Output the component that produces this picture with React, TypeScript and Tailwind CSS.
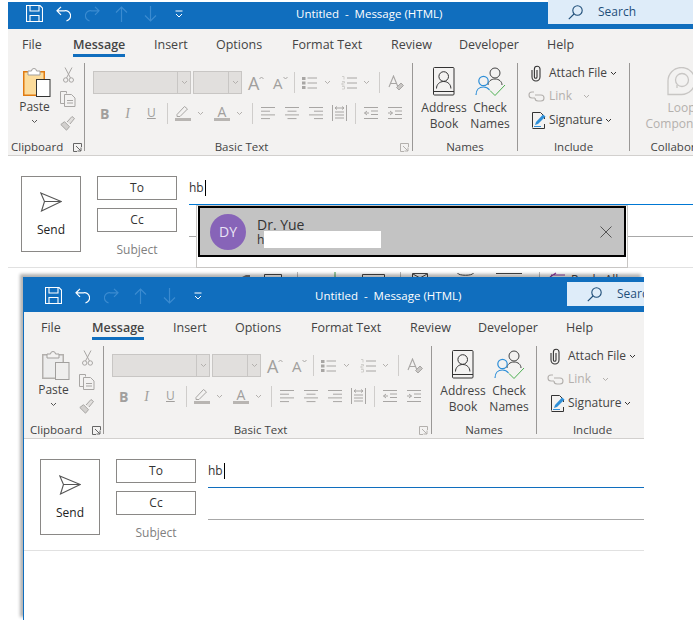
const tabs = [
  { label: 'File', width: 'w-[51px]' },
  { label: 'Message', width: 'w-[81px]', active: true },
  { label: 'Insert', width: 'w-[62px]' },
  { label: 'Options', width: 'w-[76px]' },
  { label: 'Format Text', width: 'w-[99px]' },
  { label: 'Review', width: 'w-[68px]' },
  { label: 'Developer', width: 'w-[88px]' },
  { label: 'Help', width: 'w-[40px]' },
];

const gray = '#a8a6a4';

function Chevron({ color = '#8a8886', className = '' }: { color?: string; className?: string }) {
  return (
    <svg width="7" height="5" viewBox="0 0 7 5" fill="none" className={className}>
      <path d="M1 1l2.5 2.5L6 1" stroke={color} strokeWidth="1" />
    </svg>
  );
}

function Launcher({ color }: { color: string }) {
  return (
    <svg width="9" height="9" viewBox="0 0 9 9" fill="none" className="mt-[7px] shrink-0">
      <path d="M8.5 4V.5H.5v8H4M3 3l5 5M8 4.5V8H4.5" stroke={color} strokeWidth="1" />
    </svg>
  );
}

function TitleIcons() {
  const dim = '#3b8bd0';
  return (
    <div className="flex w-[270px] shrink-0 items-center pt-[5px]">
      <div className="w-[30px]">
        <svg width="17" height="17" viewBox="0 0 17 17" fill="none" stroke="#fff" strokeWidth="1.1">
          <path d="M.5.5H14L16.5 3v13.5H.5zM4 .5V6h9V.5M4 16.5v-6h9v6" />
        </svg>
      </div>
      <div className="w-[29px]">
        <svg width="15" height="16" viewBox="0 0 15 16" fill="none" stroke="#fff" strokeWidth="1.2">
          <path d="M5 .8L1 4.8l4 4M1 4.8h7.5a5 5 0 0 1 2 10" />
        </svg>
      </div>
      <div className="w-[30px]">
        <svg width="15" height="16" viewBox="0 0 15 16" fill="none" stroke={dim} strokeWidth="1.2">
          <path d="M10 .8l4 4-4 4M14 4.8H6.5a5 5 0 0 0-2 10" />
        </svg>
      </div>
      <div className="w-[29px]">
        <svg width="13" height="16" viewBox="0 0 13 16" fill="none" stroke={dim} strokeWidth="1.2">
          <path d="M1 6.5L6.5 1 12 6.5M6.5 1v15" />
        </svg>
      </div>
      <div className="w-[31px]">
        <svg width="13" height="16" viewBox="0 0 13 16" fill="none" stroke={dim} strokeWidth="1.2">
          <path d="M1 9.5L6.5 15 12 9.5M6.5 15V0" />
        </svg>
      </div>
      <svg width="8" height="8" viewBox="0 0 8 8" fill="none" stroke="#fff" strokeWidth="1">
        <path d="M.5 1h7M1 4l3 3 3-3" />
      </svg>
    </div>
  );
}

function SearchBox() {
  return (
    <div className="flex h-[24px] flex-1 items-center gap-[15px] bg-[#deecf9] pl-[20px]">
      <svg width="15" height="15" viewBox="0 0 15 15" fill="none" stroke="#1f4e79" strokeWidth="1.1" className="shrink-0">
        <circle cx="9.5" cy="5.5" r="4.7" />
        <path d="M6 9L.8 14.2" />
      </svg>
      <span className="text-[12px] whitespace-nowrap text-[#1f4e79]">Search</span>
    </div>
  );
}

function PasteIcon({ enabled }: { enabled: boolean }) {
  return (
    <svg width="28" height="31" viewBox="0 0 28 31" fill="none">
      <rect x="0.75" y="5.75" width="20.5" height="23.5" fill={enabled ? '#fcdc9c' : '#ededed'} stroke={enabled ? '#e07b12' : '#b3b0ad'} strokeWidth="1.5" />
      <path d="M5 9V5h3.5a2.5 2.5 0 0 1 5 0H17v4z" fill={enabled ? '#fff' : '#f3f2f1'} stroke="#a19f9d" />
      <rect x="13.5" y="13.5" width="13.5" height="17" fill={enabled ? '#fff' : '#efeeed'} stroke={enabled ? '#333' : '#a19f9d'} strokeWidth="1" />
    </svg>
  );
}

function ClipboardGroup({ enabled }: { enabled: boolean }) {
  return (
    <div className="flex h-[88px] w-[77px] shrink-0 flex-col border-r border-[#9a9896]">
      <div className="flex flex-1">
        <div className="flex w-[52px] flex-col items-center pt-[3px] pl-[1px]">
          <div className="pl-[5px]">
            <PasteIcon enabled={enabled} />
          </div>
          <span className="mt-[2px] text-[12px] leading-[16px]">Paste</span>
          <Chevron color="#555" className="mt-[4px]" />
        </div>
        <div className="flex flex-1 flex-col items-start">
          <div className="flex h-[24px] w-[16px] items-center justify-center">
            <svg width="11" height="16" viewBox="0 0 11 16" fill="none" stroke={gray}>
              <path d="M2 .5L7.5 11M9 .5L3.5 11" />
              <circle cx="2.7" cy="13" r="2.2" />
              <circle cx="8.3" cy="13" r="2.2" />
            </svg>
          </div>
          <div className="flex h-[24px] w-[16px] items-center justify-center">
            <svg width="16" height="16" viewBox="0 0 16 16" fill="none" stroke={gray}>
              <path d="M5 12.5H.5V.5h6v2" />
              <path d="M4.5 3.5h7L15 7v8.5H4.5zM7 9.5h6M7 12h6" />
            </svg>
          </div>
          <div className="flex h-[24px] w-[16px] items-center justify-center">
            <svg width="16" height="16" viewBox="0 0 16 16" fill="none" stroke={gray}>
              <path d="M.8 9.5l5.7 5.7 3-3.5-5-5z" fill="#d2d0ce" />
              <path d="M7 7l5-5.5 2.5 2L10 9" fill="#e1dfdd" />
            </svg>
          </div>
        </div>
      </div>
      <div className="flex h-[15px] gap-[10px] pl-[3px]">
        <span className="text-[11.5px] leading-[22px]">Clipboard</span>
        <Launcher color="#666" />
      </div>
    </div>
  );
}

function Divider({ className = '' }: { className?: string }) {
  return <div className={`h-[21px] w-px shrink-0 bg-[#cfcdcb] ${className}`} />;
}

function LinesIcon({ rows, width = 14 }: { rows: [number, number][]; width?: number }) {
  return (
    <svg width={width} height="14" viewBox={`0 0 ${width} 14`} fill="none" stroke={gray}>
      {rows.map(([start, end], i) => (
        <path key={i} d={`M${start} ${1.5 + i * 3.7}H${end}`} />
      ))}
    </svg>
  );
}

function FontDropdown({ width }: { width: string }) {
  return (
    <div className={`flex h-[23px] shrink-0 items-stretch justify-end border border-[#c8c6c4] bg-[#e1dfdd] ${width}`}>
      <div className="flex w-[13px] items-center justify-center border-l border-[#c8c6c4]">
        <Chevron color="#b3b0ad" />
      </div>
    </div>
  );
}

function BasicTextGroup() {
  return (
    <div className="flex h-[88px] w-[328px] shrink-0 flex-col border-r border-[#9a9896]">
      <div className="flex-1 pt-[8px] pl-[8px]">
        <div className="flex h-[23px] items-center">
          <FontDropdown width="w-[98px]" />
          <FontDropdown width="ml-[2px] w-[49px]" />
          <div className="ml-[6px] flex w-[15px] items-start text-[#a19f9d]">
            <span className="text-[18px] leading-[20px]">A</span>
            <svg width="5" height="4" viewBox="0 0 5 4" fill="none" stroke={gray} className="mt-[3px] shrink-0">
              <path d="M.5 3l2-2 2 2" />
            </svg>
          </div>
          <div className="ml-[10px] flex w-[14px] items-start text-[#a19f9d]">
            <span className="text-[15px] leading-[20px]">A</span>
            <svg width="5" height="4" viewBox="0 0 5 4" fill="none" stroke={gray} className="mt-[3px] shrink-0">
              <path d="M.5 1l2 2 2-2" />
            </svg>
          </div>
          <Divider className="ml-[7px]" />
          <div className="ml-[7px] w-[15px]">
            <svg width="15" height="14" viewBox="0 0 15 14" fill="none">
              <path d="M0 1h3.5v3H0zM0 5.5h3.5v3H0zM0 10h3.5v3H0z" fill={gray} />
              <path d="M5.5 2H15M5.5 7H15M5.5 12H15" stroke={gray} />
            </svg>
          </div>
          <Chevron color="#b3b0ad" className="ml-[7px]" />
          <div className="ml-[10px] w-[16px]">
            <svg width="16" height="14" viewBox="0 0 16 14" fill="none">
              <path d="M1 .5h2v3M1 5.5h2.5V7H1v2h2.5M1 10.5h2.5V13H1" stroke="#c8c6c4" strokeWidth="0.8" />
              <path d="M6 2h10M6 7h10M6 12h10" stroke={gray} />
            </svg>
          </div>
          <Chevron color="#b3b0ad" className="ml-[6px]" />
          <Divider className="ml-[9px]" />
          <div className="ml-[8px] w-[16px]">
            <svg width="16" height="16" viewBox="0 0 16 16" fill="none" stroke={gray}>
              <path d="M1 12L5.5 1 10 12M2.5 8.5h6" strokeWidth="1.1" />
              <path d="M8.5 12.5L13 8l2.5 2.5-4.5 4.500z" fill="#c8c6c4" />
            </svg>
          </div>
        </div>
        <div className="mt-[7px] flex h-[24px] items-center text-[#a19f9d]">
          <span className="ml-[7px] w-[8px] text-center text-[14px] font-bold">B</span>
          <span className="ml-[17px] w-[5px] text-center font-['Liberation_Serif',serif] text-[14px] italic">I</span>
          <span className="ml-[17px] w-[8px] text-center text-[12px] underline">U</span>
          <Divider className="ml-[12px]" />
          <div className="ml-[7px] w-[16px]">
            <svg width="16" height="16" viewBox="0 0 16 16" fill="none" stroke={gray}>
              <path d="M2 9.5l7.5-8 3 2.5L5 11.500H2z" />
              <path d="M0 13h16v3H0z" fill="#b8b5b2" stroke="none" />
            </svg>
          </div>
          <Chevron color="#b3b0ad" className="ml-[6px]" />
          <div className="ml-[10px] flex h-[16px] w-[16px] flex-col items-center">
            <span className="h-[12px] text-[14px] leading-[13px]">A</span>
            <div className="mt-[1px] h-[3px] w-[16px] bg-[#b8b5b2]" />
          </div>
          <Chevron color="#b3b0ad" className="ml-[6px]" />
          <Divider className="ml-[9px]" />
          <div className="ml-[8px] w-[14px]">
            <LinesIcon rows={[[0, 14], [0, 9], [0, 14], [0, 9]]} />
          </div>
          <div className="ml-[10px] w-[14px]">
            <LinesIcon rows={[[0, 14], [2.5, 11.5], [0, 14], [2.5, 11.5]]} />
          </div>
          <div className="ml-[10px] w-[14px]">
            <LinesIcon rows={[[0, 14], [5, 14], [0, 14], [5, 14]]} />
          </div>
          <div className="ml-[9px] w-[15px]">
            <svg width="15" height="16" viewBox="0 0 15 16" fill="none" stroke={gray}>
              <path d="M.5 0v16M14.5 0v16M3 3h9M3 3l2-1.5M3 3l2 1.5M12 3l-2-1.5M12 3l-2 1.5M3 7h9M3 10h9M3 13h9" />
            </svg>
          </div>
          <Divider className="ml-[8px]" />
          <div className="ml-[8px] w-[14px]">
            <svg width="14" height="14" viewBox="0 0 14 14" fill="none" stroke={gray}>
              <path d="M0 1.5h14M7 5h7M7 8.5h7M0 12.5h14M5 7H.5M3 5L.5 7 3 9" />
            </svg>
          </div>
          <div className="ml-[10px] w-[14px]">
            <svg width="14" height="14" viewBox="0 0 14 14" fill="none" stroke={gray}>
              <path d="M0 1.5h14M7 5h7M7 8.5h7M0 12.5h14M0 7h4.5M2 5l2.5 2L2 9" />
            </svg>
          </div>
        </div>
      </div>
      <div className="flex h-[15px] pr-[3px]">
        <span className="flex-1 pr-[2px] text-center text-[11.5px] leading-[22px]">Basic Text</span>
        <Launcher color="#b3b0ad" />
      </div>
    </div>
  );
}

function NamesGroup() {
  return (
    <div className="flex h-[88px] w-[105px] shrink-0 flex-col border-r border-[#9a9896]">
      <div className="flex flex-1 pt-[4px] pl-[4px] text-center text-[12px] leading-[16px]">
        <div className="flex w-[54px] flex-col items-center">
          <svg width="22" height="29" viewBox="0 0 22 29" fill="none" stroke="#333" className="shrink-0">
            <rect x="0.5" y="0.5" width="20.5" height="27.5" rx="1" />
            <path d="M1 24.5h20" />
            <circle cx="10.7" cy="9.5" r="4.8" />
            <path d="M3.5 21.5c0-4 3-7 7.2-7s7.2 3 7.2 7" />
          </svg>
          <span className="mt-[4px]">Address Book</span>
        </div>
        <div className="flex w-[38px] flex-col items-center">
          <svg width="31" height="29" viewBox="0 0 31 29" fill="none" className="shrink-0">
            <circle cx="20" cy="6" r="5" stroke="#444" />
            <path d="M13 18c0-3.5 3-6 7-6s7 2.5 7 6" stroke="#444" />
            <circle cx="8.5" cy="14" r="4.7" stroke="#2e8fd8" strokeWidth="1.2" />
            <path d="M1 28c0-5 3-8 7.5-8 2.5 0 4.5 1 6 3" stroke="#2e8fd8" strokeWidth="1.2" />
            <path d="M15 23.5l5 5L30 18" stroke="#4caf50" />
          </svg>
          <span className="mt-[4px]">Check Names</span>
        </div>
      </div>
      <div className="h-[15px] text-center text-[11.5px] leading-[22px]">Names</div>
    </div>
  );
}

function IncludeGroup() {
  return (
    <div className="flex h-[88px] w-[112px] shrink-0 flex-col border-r border-[#9a9896]">
      <div className="flex flex-1 flex-col text-[12px] leading-[16px]">
        <div className="flex h-[20px] items-center pl-[12px]">
          <div className="w-[19px]">
            <svg width="12" height="17" viewBox="0 0 12 17" fill="none" stroke="#333" strokeWidth="1.1">
              <path d="M2 5v7a4 4 0 0 0 8 0V4a2.8 2.8 0 0 0-5.6 0v8a1.2 1.2 0 0 0 2.6 0V5" />
            </svg>
          </div>
          <span>Attach File</span>
          <Chevron color="#333" className="ml-[3px]" />
        </div>
        <div className="mt-[3px] flex h-[20px] items-center pl-[10px] text-[#b3b0ad]">
          <div className="w-[21px]">
            <svg width="17" height="11" viewBox="0 0 17 11" fill="none" stroke="#b3b0ad" strokeWidth="1.1">
              <path d="M6 1H4a3 3 0 0 0 0 6h3M7 4h6a3 3 0 0 1 0 6h-3a3 3 0 0 1-3-3" />
            </svg>
          </div>
          <span>Link</span>
          <Chevron color="#b3b0ad" className="ml-[11px]" />
        </div>
        <div className="mt-[4px] flex h-[20px] items-center pl-[14px]">
          <div className="w-[17px]">
            <svg width="15" height="17" viewBox="0 0 15 17" fill="none">
              <path d="M.5 15.5V.5h8l4 4V7" stroke="#333" />
              <path d="M.5 16.5h12V12" stroke="#333" />
              <path d="M3 13l1-3 7-7.5 2.5 2L6 12z" fill="#2e8fd8" />
              <path d="M2 14.5h7" stroke="#2e8fd8" />
            </svg>
          </div>
          <span>Signature</span>
          <Chevron color="#333" className="ml-[3px]" />
        </div>
      </div>
      <div className="h-[15px] text-center text-[11.5px] leading-[22px]">Include</div>
    </div>
  );
}

function CollabGroup() {
  return (
    <div className="flex h-[88px] w-[103px] shrink-0 flex-col">
      <div className="flex flex-1 flex-col items-center pt-[4px] text-center text-[12px] leading-[16px] whitespace-nowrap text-[#b3b0ad]">
        <svg width="30" height="29" viewBox="0 0 30 29" fill="none" stroke="#c8c6c4" strokeWidth="1.3" className="shrink-0">
          <path d="M1 27.5V14a13.5 13.5 0 1 1 13.5 13.5z" />
          <circle cx="15" cy="13" r="6.5" />
          <path d="M10 18v3" />
        </svg>
        <span className="mt-[4px]">Loop</span>
        <span>Components</span>
      </div>
      <div className="h-[15px] text-center text-[11.5px] leading-[22px]">Collaborate</div>
    </div>
  );
}

function Window({ inset, enabled, fieldLine, titleClass }: { inset: string; enabled: boolean; fieldLine: string; titleClass: string }) {
  return (
    <div className="w-full font-['Open_Sans',sans-serif] text-[#444]">
      {/* Title bar */}
      <div className={`flex items-end bg-[#106ebe] ${titleClass}`}>
        <div className={`flex h-[28px] min-w-0 flex-1 items-start overflow-hidden pl-[18px] ${inset}`}>
          <TitleIcons />
          <div className="w-[252px] shrink-0 pt-[6px] text-[11.5px] leading-[16px] whitespace-pre text-white">Untitled  -  Message (HTML)</div>
          <SearchBox />
        </div>
      </div>

      {/* Tabs */}
      <div className="h-[28px] bg-[#f3f2f1]">
        <div className={`flex pl-[14px] ${inset}`}>
          {tabs.map((tab) => (
            <div key={tab.label} className={`shrink-0 ${tab.width}`}>
              <span className={`inline-block h-[28px] border-b-[3px] pt-[6px] text-[12.5px] leading-[19px] ${tab.active ? 'border-[#106ebe] font-semibold' : 'border-transparent'}`}>
                {tab.label}
              </span>
            </div>
          ))}
        </div>
      </div>

      {/* Ribbon */}
      <div className="h-[99px] overflow-hidden border-b border-[#d2d0ce] bg-[#f3f2f1] pt-[6px]">
        <div className={`flex ${inset}`}>
          <ClipboardGroup enabled={enabled} />
          <BasicTextGroup />
          <NamesGroup />
          <IncludeGroup />
          <CollabGroup />
        </div>
      </div>

      {/* Compose header */}
      <div className="h-[112px] border-b border-[#e1e1e1] bg-white pt-[20px]">
        <div className={`flex pl-[13px] ${inset}`}>
          <div className="flex h-[76px] w-[60px] shrink-0 flex-col items-center border border-[#8a8886] pt-[15px]">
            <svg width="22" height="20" viewBox="0 0 22 20" fill="none" stroke="#555" strokeWidth="1.1">
              <path d="M.8 1l20.5 8.5L1.5 19l3-9.5zM4.5 9.5H21" />
            </svg>
            <span className="mt-[10px] text-[12px] leading-[16px] text-[#222]">Send</span>
          </div>
          <div className="ml-[16px] w-[80px] shrink-0 text-center text-[12px] text-[#333]">
            <div className="flex h-[24px] items-center justify-center border border-[#8a8886]">To</div>
            <div className="mt-[8px] flex h-[24px] items-center justify-center border border-[#8a8886]">Cc</div>
            <div className="mt-[9px] text-[#808080]">Subject</div>
          </div>
          <div className="ml-[12px] min-w-0 flex-1">
            <div className={`flex h-[29px] items-center border-b pb-[5px] text-[12px] text-[#333] ${fieldLine}`}>
              hb
              <span className="ml-px h-[16px] w-px bg-black" />
            </div>
            <div className="h-[32px] border-b border-[#a8a8a8]" />
          </div>
        </div>
      </div>
    </div>
  );
}

function Suggestion() {
  return (
    <div className="absolute top-[205px] left-[196px] z-10 h-[63px] w-[432px] border border-[#c8c6c4] bg-white pl-px font-['Open_Sans',sans-serif]">
      <div className="flex h-[51px] w-[428px] items-center border-2 border-black bg-[#c3c3c3] pl-[10px]">
        <div className="flex h-[36px] w-[36px] shrink-0 items-center justify-center rounded-full bg-[#8764b8] text-[14px] text-[#e9e2f5]">DY</div>
        <div className="ml-[11px] flex-1 pt-[1px] text-[#333]">
          <div className="h-[15px] text-[14px] leading-[17px]">Dr. Yue</div>
          <div className="flex h-[17px] items-center text-[12px]">
            h
            <span className="h-[17px] w-[117px] bg-white" />
          </div>
        </div>
        <svg width="12" height="12" viewBox="0 0 12 12" fill="none" stroke="#555" className="mr-[12px]">
          <path d="M.5.5l11 11M11.5.5l-11 11" />
        </svg>
      </div>
    </div>
  );
}

// what shows of a third window in the gap above the front one
function PeekStrip() {
  return (
    <div className="absolute top-[272px] left-[220px] h-[6px] w-[424px] overflow-hidden">
      <svg width="424" height="6" viewBox="0 0 424 6" fill="none" stroke="#444">
        <path d="M20 6l6-3h4v3z" fill="#777" stroke="none" />
        <path d="M44.5 6V2.5h17V6" />
        <path d="M77.5 0v6" stroke="#bbb" />
        <path d="M115 0v6" stroke="#3a9a4a" />
        <path d="M142.5 6V2.5h22V6" />
        <path d="M180.5 0v6" stroke="#bbb" />
        <path d="M192.5 6V1.5h15V6M193 2l7 4 7-4" />
        <path d="M237.5 1c1 3 15 3 16 0" />
        <path d="M276 1.5h26" />
        <path d="M319.5 0v6" stroke="#bbb" />
        <path d="M330 5l6-4M331 3h14" stroke="#8e3a9e" strokeWidth="1.2" />
      </svg>
      <span className="absolute top-0 left-[351px] font-['Open_Sans',sans-serif] text-[12px] leading-[16px] text-[#444]">Reply All</span>
    </div>
  );
}

export default function App() {
  return (
    <div className="relative h-[620px] w-[693px] overflow-hidden bg-white">
      <div className="ml-2 pt-[2px]">
        <Window inset="" enabled fieldLine="border-[#0078d4]" titleClass="h-[27px] pb-px" />
      </div>
      <Suggestion />
      <PeekStrip />
      <div className="absolute top-[277px] left-[23px] h-[343px] w-[621px] border-l border-[#106ebe] bg-white shadow-[-3px_-3px_3px_0_rgba(0,0,0,0.3)]">
        <Window inset="ml-[3px]" enabled={false} fieldLine="border-[#106ebe]" titleClass="h-[35px] pb-[2px]" />
      </div>
    </div>
  );
}
